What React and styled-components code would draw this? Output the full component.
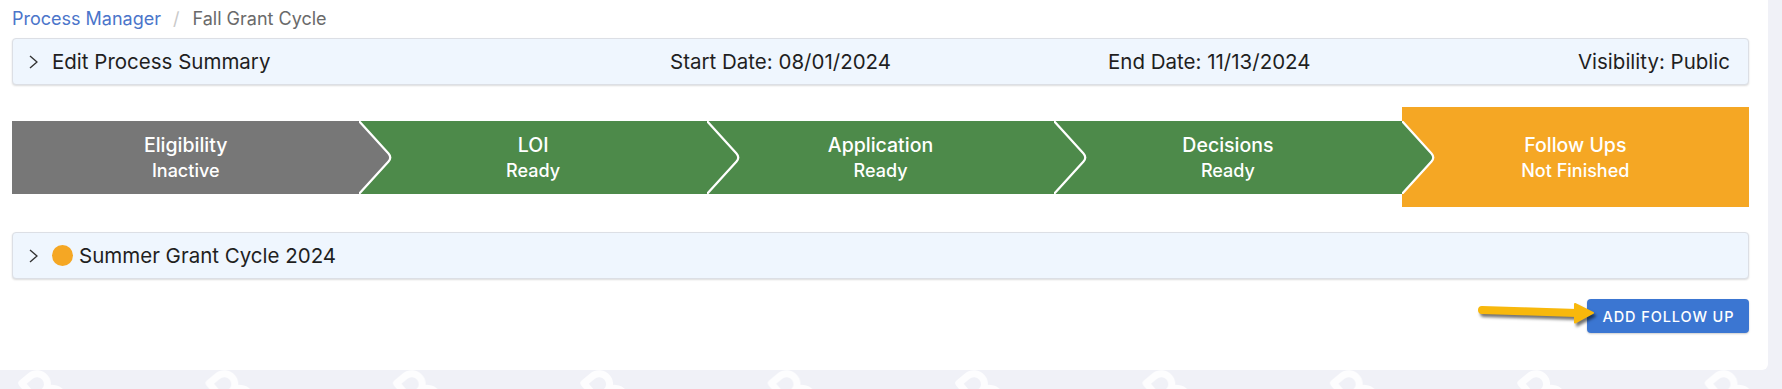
import React from 'react';
import styled, { createGlobalStyle } from 'styled-components';

const GlobalStyle = createGlobalStyle`
  html, body { margin: 0; padding: 0; background: #f0f1f7; }
  body { font-family: Inter, "Noto Sans", sans-serif; }
`;

const steps = [
  { title: 'Eligibility', status: 'Inactive', color: '#777777' },
  { title: 'LOI', status: 'Ready', color: '#4d8a4a' },
  { title: 'Application', status: 'Ready', color: '#4d8a4a' },
  { title: 'Decisions', status: 'Ready', color: '#4d8a4a' },
  { title: 'Follow Ups', status: 'Not Finished', color: '#f5a724', active: true },
];

// faint logo marks on the page background
function Watermark() {
  return (
    <Backdrop aria-hidden="true">
      <defs>
        <pattern id="wm" width="187.4" height="94" x="0" y="367" patternUnits="userSpaceOnUse">
          <g transform="translate(42 28) rotate(-40)" fill="none" stroke="#fff" strokeWidth="7" strokeLinecap="round">
            <path d="M-8 -22 V22 M-8 -22 H3 A10 10 0 0 1 3 -1 H-8 M-8 -1 H5 A11.5 11.5 0 0 1 5 22 H-8" />
          </g>
          <g transform="translate(135 75) rotate(-40)" fill="none" stroke="#fff" strokeWidth="7" strokeLinecap="round">
            <path d="M-8 -22 V22 M-8 -22 H3 A10 10 0 0 1 3 -1 H-8 M-8 -1 H5 A11.5 11.5 0 0 1 5 22 H-8" />
          </g>
        </pattern>
      </defs>
      <rect width="100%" height="100%" fill="url(#wm)" />
    </Backdrop>
  );
}

function Chevron() {
  return (
    <ChevronIcon viewBox="0 0 9 14" width="9" height="14">
      <polyline points="1,1 8,7 1,13" fill="none" stroke="#333" strokeWidth="1.4" strokeLinejoin="round" />
    </ChevronIcon>
  );
}

function StepArrow({ color }) {
  return (
    <ArrowSvg viewBox="0 0 38 73" width="38" height="73">
      <path d="M0 0 L29.5 32.5 Q33 36.5 29.5 40.5 L0 73 Z" fill={color} />
      <path d="M0 0 L29.5 32.5 Q33 36.5 29.5 40.5 L0 73" fill="none" stroke="#fff" strokeWidth="2.2" />
    </ArrowSvg>
  );
}

function App() {
  return (
    <>
      <GlobalStyle />
      <Watermark />
      <Card>
        <Crumbs>
          <CrumbLink>Process Manager</CrumbLink>
          <CrumbSep>/</CrumbSep>
          <CrumbCurrent>Fall Grant Cycle</CrumbCurrent>
        </Crumbs>

        <Panel>
          <Chevron />
          <SummaryGrid>
            <Cell>Edit Process Summary</Cell>
            <Cell right>Start Date: 08/01/2024</Cell>
            <Cell right>End Date: 11/13/2024</Cell>
            <Cell right>Visibility: Public</Cell>
          </SummaryGrid>
        </Panel>

        <Stepper>
          {steps.map((s) => (
            <Step key={s.title} bg={s.color} active={s.active}>
              <StepTitle>{s.title}</StepTitle>
              <StepStatus>{s.status}</StepStatus>
              {!s.active && <StepArrow color={s.color} />}
            </Step>
          ))}
        </Stepper>

        <CyclePanel>
          <Chevron />
          <Dot />
          <CycleName>Summer Grant Cycle 2024</CycleName>
        </CyclePanel>

        <Actions>
          <Pointer viewBox="0 0 124 28" width="124" height="28">
            <line x1="6" y1="10" x2="101" y2="13" stroke="#f8b80c" strokeWidth="8" strokeLinecap="round" />
            <path d="M99 4 L117 12.8 L99 22.5 Z" fill="#f8b80c" stroke="#f8b80c" strokeWidth="2" strokeLinejoin="round" />
          </Pointer>
          <AddButton>ADD FOLLOW UP</AddButton>
        </Actions>
      </Card>
    </>
  );
}

export default App;

const Backdrop = styled.svg`
  position: fixed;
  inset: 0;
  width: 100%;
  height: 100%;
  z-index: -1;
  opacity: 0.85;
`;

const Card = styled.div`
  width: 1768px;
  box-sizing: border-box;
  background: #fff;
  border-radius: 0 0 6px 0;
  padding: 0 19px 37px 12px;
`;

const Crumbs = styled.nav`
  display: flex;
  align-items: center;
  height: 38px;
  padding-bottom: 2px;
  box-sizing: border-box;
  font-size: 18px;
`;

const CrumbLink = styled.span`
  color: #4b75ca;
`;

const CrumbSep = styled.span`
  color: #c9c9c9;
  padding: 0 13px 0 12px;
`;

const CrumbCurrent = styled.span`
  color: #6a6a6a;
`;

const Panel = styled.div`
  display: flex;
  align-items: center;
  height: 47px;
  box-sizing: border-box;
  padding: 0 18px 0 16px;
  background: #eff6fe;
  border: 1px solid #dcdfe5;
  border-radius: 4px;
  box-shadow: 0 1px 2px rgba(0, 0, 0, 0.14);
  color: #1f1f1f;
  font-size: 20.5px;
`;

const ChevronIcon = styled.svg`
  flex: none;
  margin-right: 14px;
`;

const SummaryGrid = styled.div`
  flex: 1;
  display: grid;
  grid-template-columns: repeat(4, 1fr);
`;

const Cell = styled.div`
  text-align: ${({ right }) => (right ? 'right' : 'left')};
  white-space: nowrap;
`;

const Stepper = styled.div`
  display: flex;
  align-items: center;
  height: 100px;
  margin-top: 22px;
`;

const Step = styled.div`
  position: relative;
  flex: 1 1 0;
  height: ${({ active }) => (active ? '100px' : '73px')};
  background: ${({ bg }) => bg};
  color: #fff;
  display: flex;
  flex-direction: column;
  align-items: center;
  justify-content: center;
  font-weight: 500;
`;

const StepTitle = styled.div`
  font-size: 19.5px;
  line-height: 26px;
`;

const StepStatus = styled.div`
  font-size: 18px;
  line-height: 25px;
`;

const ArrowSvg = styled.svg`
  position: absolute;
  left: 100%;
  top: 0;
  z-index: 1;
`;

const CyclePanel = styled(Panel)`
  margin-top: 25px;
`;

const Dot = styled.span`
  flex: none;
  width: 21px;
  height: 21px;
  border-radius: 50%;
  background: #f5a724;
  margin-right: 6px;
`;

const CycleName = styled.span`
  white-space: nowrap;
`;

const Actions = styled.div`
  position: relative;
  display: flex;
  justify-content: flex-end;
  margin-top: 20px;
`;

const Pointer = styled.svg`
  position: absolute;
  right: 149px;
  top: 1px;
  filter: drop-shadow(2px 3px 1.5px rgba(0, 0, 0, 0.55));
  z-index: 1;
`;

const AddButton = styled.button`
  height: 34px;
  width: 162px;
  padding: 0 0 0 1px;
  border: none;
  border-radius: 4px;
  background: #3b76d2;
  color: #fff;
  font-family: Inter, sans-serif;
  font-size: 14.5px;
  font-weight: 500;
  letter-spacing: 0.9px;
  box-shadow: 0 1px 2px rgba(0, 0, 0, 0.2);
`;
